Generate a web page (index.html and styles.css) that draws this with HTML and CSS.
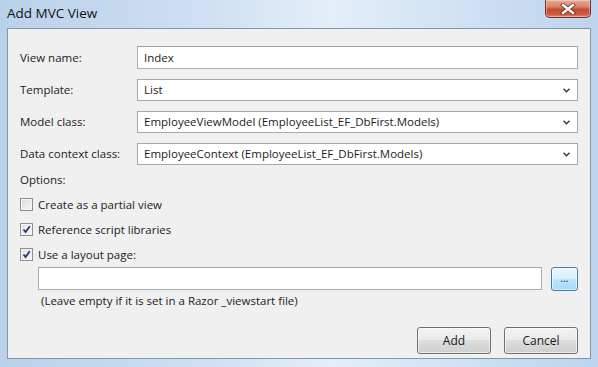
FILE: index.html
```html
<!DOCTYPE html>
<html>
<head>
<meta charset="utf-8">
<link rel="stylesheet" href="styles.css">
</head>
<body>
<div class="window">
  <div class="titlebar"><span class="title">Add MVC View</span></div>
  <div class="close">
    <svg width="16" height="12" viewBox="0 0 16 12"><path d="M3 2 L13 10 M13 2 L3 10" stroke="#6b2a20" stroke-width="4" stroke-linecap="square"/><path d="M3 2 L13 10 M13 2 L3 10" stroke="#fff" stroke-width="2.4" stroke-linecap="square"/></svg>
  </div>
  <div class="client">
    <div class="row"><span class="label">View name:</span><div class="field">Index</div></div>
    <div class="row"><span class="label">Template:</span><div class="field combo">List<svg class="chev" width="7" height="5" viewBox="0 0 7 5"><path d="M0.5 0.8 L3.5 3.8 L6.5 0.8" fill="none" stroke="#333" stroke-width="1.3"/></svg></div></div>
    <div class="row"><span class="label">Model class:</span><div class="field combo">EmployeeViewModel (EmployeeList_EF_DbFirst.Models)<svg class="chev" width="7" height="5" viewBox="0 0 7 5"><path d="M0.5 0.8 L3.5 3.8 L6.5 0.8" fill="none" stroke="#333" stroke-width="1.3"/></svg></div></div>
    <div class="row"><span class="label">Data context class:</span><div class="field combo">EmployeeContext (EmployeeList_EF_DbFirst.Models)<svg class="chev" width="7" height="5" viewBox="0 0 7 5"><path d="M0.5 0.8 L3.5 3.8 L6.5 0.8" fill="none" stroke="#333" stroke-width="1.3"/></svg></div></div>
    <div class="options">Options:</div>
    <div class="check first"><span class="box"></span>Create as a partial view</div>
    <div class="check"><span class="box on"><svg width="9" height="9" viewBox="0 0 9 9"><path d="M1.5 4.5 L3.6 7 L7.8 1.2" fill="none" stroke="#22357a" stroke-width="1.8"/></svg></span>Reference script libraries</div>
    <div class="check"><span class="box on"><svg width="9" height="9" viewBox="0 0 9 9"><path d="M1.5 4.5 L3.6 7 L7.8 1.2" fill="none" stroke="#22357a" stroke-width="1.8"/></svg></span>Use a layout page:</div>
    <div class="layout-row"><div class="field layout"></div><div class="btn browse">...</div></div>
    <div class="hint">(Leave empty if it is set in a Razor _viewstart file)</div>
    <div class="buttons"><div class="btn push">Add</div><div class="btn push">Cancel</div></div>
  </div>
</div>
</body>
</html>
```

FILE: styles.css
```css
html, body { margin: 0; padding: 0; }
body {
  width: 598px; height: 367px; overflow: hidden;
  font-family: "Open Sans", "Noto Sans", sans-serif;
  font-size: 11.5px; color: #1b1b1b;
}
.window {
  position: relative;
  width: 598px; height: 367px;
  background: linear-gradient(90deg, #b9d1ea 0%, #cfe0f3 35%, #e4eef9 55%, #cde0f3 80%, #bcd4ec 100%);
  display: flex; flex-direction: column;
}
.titlebar {
  height: 28px; padding-left: 7px; flex: none;
  display: flex; align-items: center;
}
.title { font-size: 13.5px; color: #111; position: relative; top: -1px; }
.close {
  position: absolute; left: 545px; top: 0; width: 44px; height: 17px;
  border: 1px solid #7b2a1e; border-top: none;
  border-radius: 0 0 5px 5px;
  background: linear-gradient(180deg, #e9a898 0%, #d9826c 40%, #c44a32 55%, #cf5a40 85%, #e08a70 100%);
  display: flex; align-items: center; justify-content: center;
  box-shadow: inset 0 0 0 1px rgba(255,255,255,0.35);
}
.close svg { margin-top: 1px; }
.client {
  margin: 0 7px 6px 7px;
  height: 331px; flex: none;
  border: 1px solid #8496ab;
  background: #f0f0f0;
  padding: 17px 12px 0 12px;
  box-sizing: border-box;
  display: flex; flex-direction: column;
}
.client > * { flex-shrink: 0; }
.row {
  display: flex; align-items: center;
  height: 23px; margin-bottom: 9px;
}
.label { width: 117px; flex: none; }
.field {
  flex: 1; height: 23px; box-sizing: border-box;
  background: #fff; border: 1px solid #abadb3;
  border-top-color: #a0a2a8;
  padding-left: 6px; display: flex; align-items: center;
  position: relative;
}
.combo { border-color: #a9a9a9; height: 22px; }
.chev { position: absolute; right: 7px; top: 8px; }
.options { margin-top: -2px; height: 16px; line-height: 16px; }
.check {
  display: flex; align-items: center; height: 25px;
}
.check.first { margin-top: 4px; }
.box {
  width: 11px; height: 11px; margin-right: 5px;
  border: 1px solid #8e8f8f;
  background: linear-gradient(135deg, #dcdcdc 0%, #f6f6f6 100%);
  box-shadow: inset 0 0 0 1px #f4f4f4;
  display: flex; align-items: center; justify-content: center;
}
.box.on { background: linear-gradient(135deg, #e2e2e2 0%, #fafafa 100%); }
.layout-row {
  display: flex; align-items: center; padding-left: 18px; height: 23px;
}
.field.layout { flex: none; width: 504px; }
.btn {
  box-sizing: border-box; display: flex; align-items: center; justify-content: center;
  border: 1px solid #707070; border-radius: 3px;
  background: linear-gradient(180deg, #f2f2f2 0%, #ebebeb 49%, #dddddd 50%, #cfcfcf 100%);
  box-shadow: inset 0 0 0 1px rgba(255,255,255,0.6);
}
.browse {
  width: 28px; height: 24px; margin-left: 9px;
  border-color: #3c7fb1;
  background: linear-gradient(180deg, #eaf6fd 0%, #d9f0fc 49%, #bee6fd 50%, #a7d9f5 100%);
  font-size: 10px; padding-bottom: 2px;
}
.hint { margin-top: 3px; padding-left: 21px; height: 16px; line-height: 16px; }
.buttons {
  display: flex; justify-content: flex-end; gap: 13px;
  margin-top: 18px;
}
.push { width: 74px; height: 27px; font-size: 12px; }
```
